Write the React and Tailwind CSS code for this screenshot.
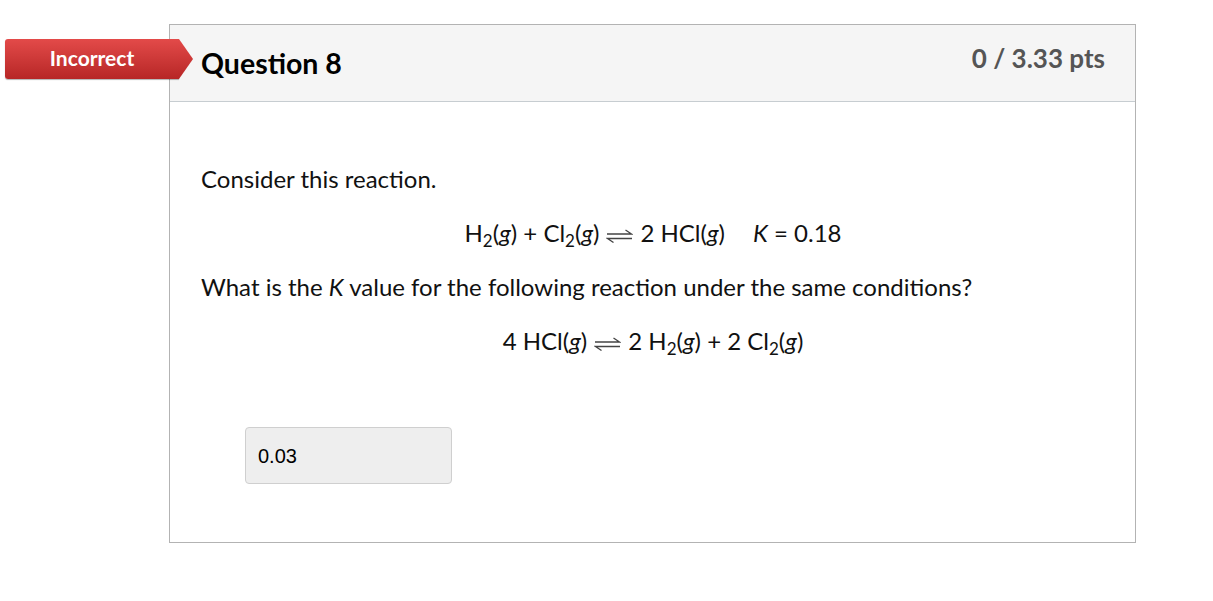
import React from "react";

function Equil() {
  return (
    <svg className="inline-block mx-[7px] align-middle" width="27" height="14" viewBox="0 0 27 14">
      <path d="M1 5 H25.5 L19.5 1" fill="none" stroke="#444" strokeWidth="1.3" />
      <path d="M26 9.5 H1.5 L7.5 13.5" fill="none" stroke="#444" strokeWidth="1.3" />
    </svg>
  );
}

function Sub({ children }) {
  return <sub className="text-[17px] relative top-[5px] align-baseline">{children}</sub>;
}

function G() {
  return (
    <>
      (<i>g</i>)
    </>
  );
}

export default function App() {
  return (
    <div className="bg-white min-h-[601px] pt-[24px]" style={{ fontFamily: "Lato, 'Open Sans', sans-serif" }}>
      <div className="relative ml-[169px] w-[967px] h-[519px] border border-[#b3b3b3] text-[#111]">
        {/* Incorrect badge */}
        <div className="absolute left-[-165px] top-[14px] flex items-center">
          <div className="w-[174px] h-[40px] rounded-l-[3px] bg-gradient-to-b from-[#e34a49] to-[#b72626] flex items-center justify-center text-white font-bold text-[21px] pb-[3px] shadow-[0_1px_1px_rgba(0,0,0,0.3)]">
            Incorrect
          </div>
          <svg width="15" height="40" viewBox="0 0 15 40" className="-ml-px">
            <defs>
              <linearGradient id="bg" x1="0" y1="0" x2="0" y2="1">
                <stop offset="0" stopColor="#e34a49" />
                <stop offset="1" stopColor="#b72626" />
              </linearGradient>
            </defs>
            <path d="M0 0 H1 L15 20 L1 40 H0 Z" fill="url(#bg)" />
          </svg>
        </div>

        {/* header */}
        <div className="h-[77px] bg-[#f5f5f5] border-b border-[#c7cdd1] flex items-start justify-between pl-[31px] pr-[30px]">
          <div className="pt-[17px] text-[28.5px] font-bold text-black">Question 8</div>
          <div className="pt-[14px] text-[26px] font-bold text-[#555]">0 / 3.33 pts</div>
        </div>

        {/* body */}
        <div className="pl-[31px] pr-[30px] pt-[62px] text-[24px]">
          <p className="leading-[30px]">Consider this reaction.</p>
          <p className="leading-[30px] mt-[24px] text-center">
            H<Sub>2</Sub><G /> + Cl<Sub>2</Sub><G />
            <Equil />2 HCl<G />
            <span className="ml-[28px]"><i>K</i> = 0.18</span>
          </p>
          <p className="leading-[30px] mt-[24px]">
            What is the <i>K</i> value for the following reaction under the same conditions?
          </p>
          <p className="leading-[30px] mt-[24px] text-center">
            4 HCl<G />
            <Equil />2 H<Sub>2</Sub><G /> + 2 Cl<Sub>2</Sub><G />
          </p>
          <div className="mt-[71px] ml-[44px] w-[207px] h-[57px] bg-[#eeeeee] border border-[#cfcfcf] rounded-[4px] flex items-center pl-[12px] text-[20px] text-black" style={{ fontFamily: "'Liberation Sans', Arial, sans-serif" }}>
            0.03
          </div>
        </div>
      </div>
    </div>
  );
}
